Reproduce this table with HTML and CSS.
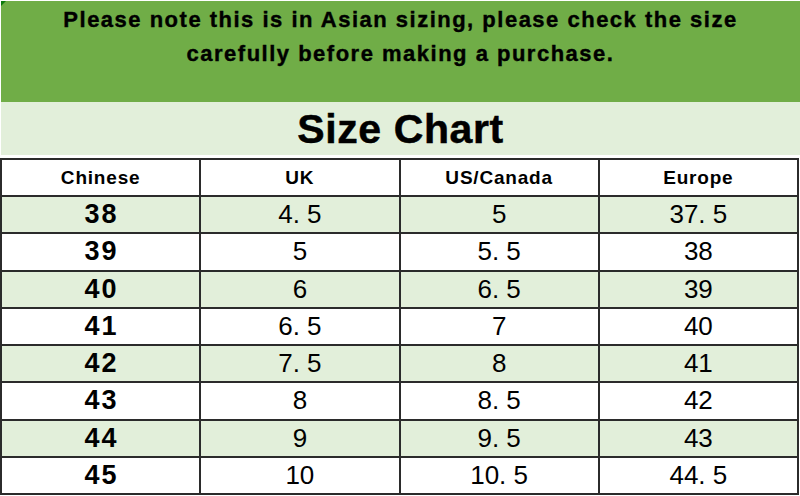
FILE: index.html
```html
<!DOCTYPE html>
<html>
<head>
<meta charset="utf-8">
<link rel="stylesheet" href="styles.css">
</head>
<body>
<div class="page">
  <div class="banner">
    <p class="notice">Please note this is in Asian sizing, please check the size<br>carefully before making a purchase.</p>
  </div>
  <div class="title"><h1>Size Chart</h1></div>
  <div class="gap"></div>
  <div class="chart">
    <div class="cell head">Chinese</div><div class="cell head">UK</div><div class="cell head">US/Canada</div><div class="cell head">Europe</div>
    <div class="cell g key">38</div><div class="cell g">4. 5</div><div class="cell g">5</div><div class="cell g">37. 5</div>
    <div class="cell key">39</div><div class="cell">5</div><div class="cell">5. 5</div><div class="cell">38</div>
    <div class="cell g key">40</div><div class="cell g">6</div><div class="cell g">6. 5</div><div class="cell g">39</div>
    <div class="cell key">41</div><div class="cell">6. 5</div><div class="cell">7</div><div class="cell">40</div>
    <div class="cell g key">42</div><div class="cell g">7. 5</div><div class="cell g">8</div><div class="cell g">41</div>
    <div class="cell key">43</div><div class="cell">8</div><div class="cell">8. 5</div><div class="cell">42</div>
    <div class="cell g key">44</div><div class="cell g">9</div><div class="cell g">9. 5</div><div class="cell g">43</div>
    <div class="cell key">45</div><div class="cell">10</div><div class="cell">10. 5</div><div class="cell">44. 5</div>
  </div>
</div>
</body>
</html>
```
FILE: styles.css
```css
html, body {
  margin: 0;
  padding: 0;
  background: #ffffff;
}
.page {
  width: 800px;
  height: 496px;
  overflow: hidden;
  font-family: "Liberation Sans", Arial, sans-serif;
  color: #000;
}
.banner {
  position: relative;
  margin: 1px 0 0 1px;
  height: 101px;
  background: #70ad47;
  display: flex;
  justify-content: center;
}
.banner::before {
  content: "";
  position: absolute;
  left: 0;
  top: 0;
  border-top: 5px solid #0b7a0b;
  border-right: 5px solid transparent;
}
.notice {
  margin: 2px 0 0;
  text-align: center;
  font-weight: bold;
  font-size: 22px;
  line-height: 34px;
  letter-spacing: 1.5px;
  -webkit-text-stroke: 0.4px #000;
}
.title {
  margin-left: 1px;
  height: 53px;
  background: #e2efda;
  display: flex;
  justify-content: center;
  align-items: center;
}
.title h1 {
  margin: 2px 0 0 0;
  font-size: 41px;
  font-weight: bold;
  letter-spacing: 0.6px;
  -webkit-text-stroke: 0.5px #000;
}
.gap {
  height: 3px;
}
.chart {
  width: 795px;
  height: 333px;
  background: #2b2b2b;
  padding: 2px;
  display: grid;
  grid-template-columns: repeat(4, 1fr);
  grid-template-rows: 35px repeat(8, 1fr);
  gap: 2px;
}
.cell {
  background: #ffffff;
  display: flex;
  align-items: center;
  justify-content: center;
  font-size: 26px;
}
.cell.g {
  background: #e2efda;
}
.cell.head {
  font-weight: bold;
  font-size: 19px;
  letter-spacing: 0.8px;
}
.cell.key {
  font-weight: bold;
  font-size: 27px;
  letter-spacing: 2px;
  text-indent: 2px;
}
```
